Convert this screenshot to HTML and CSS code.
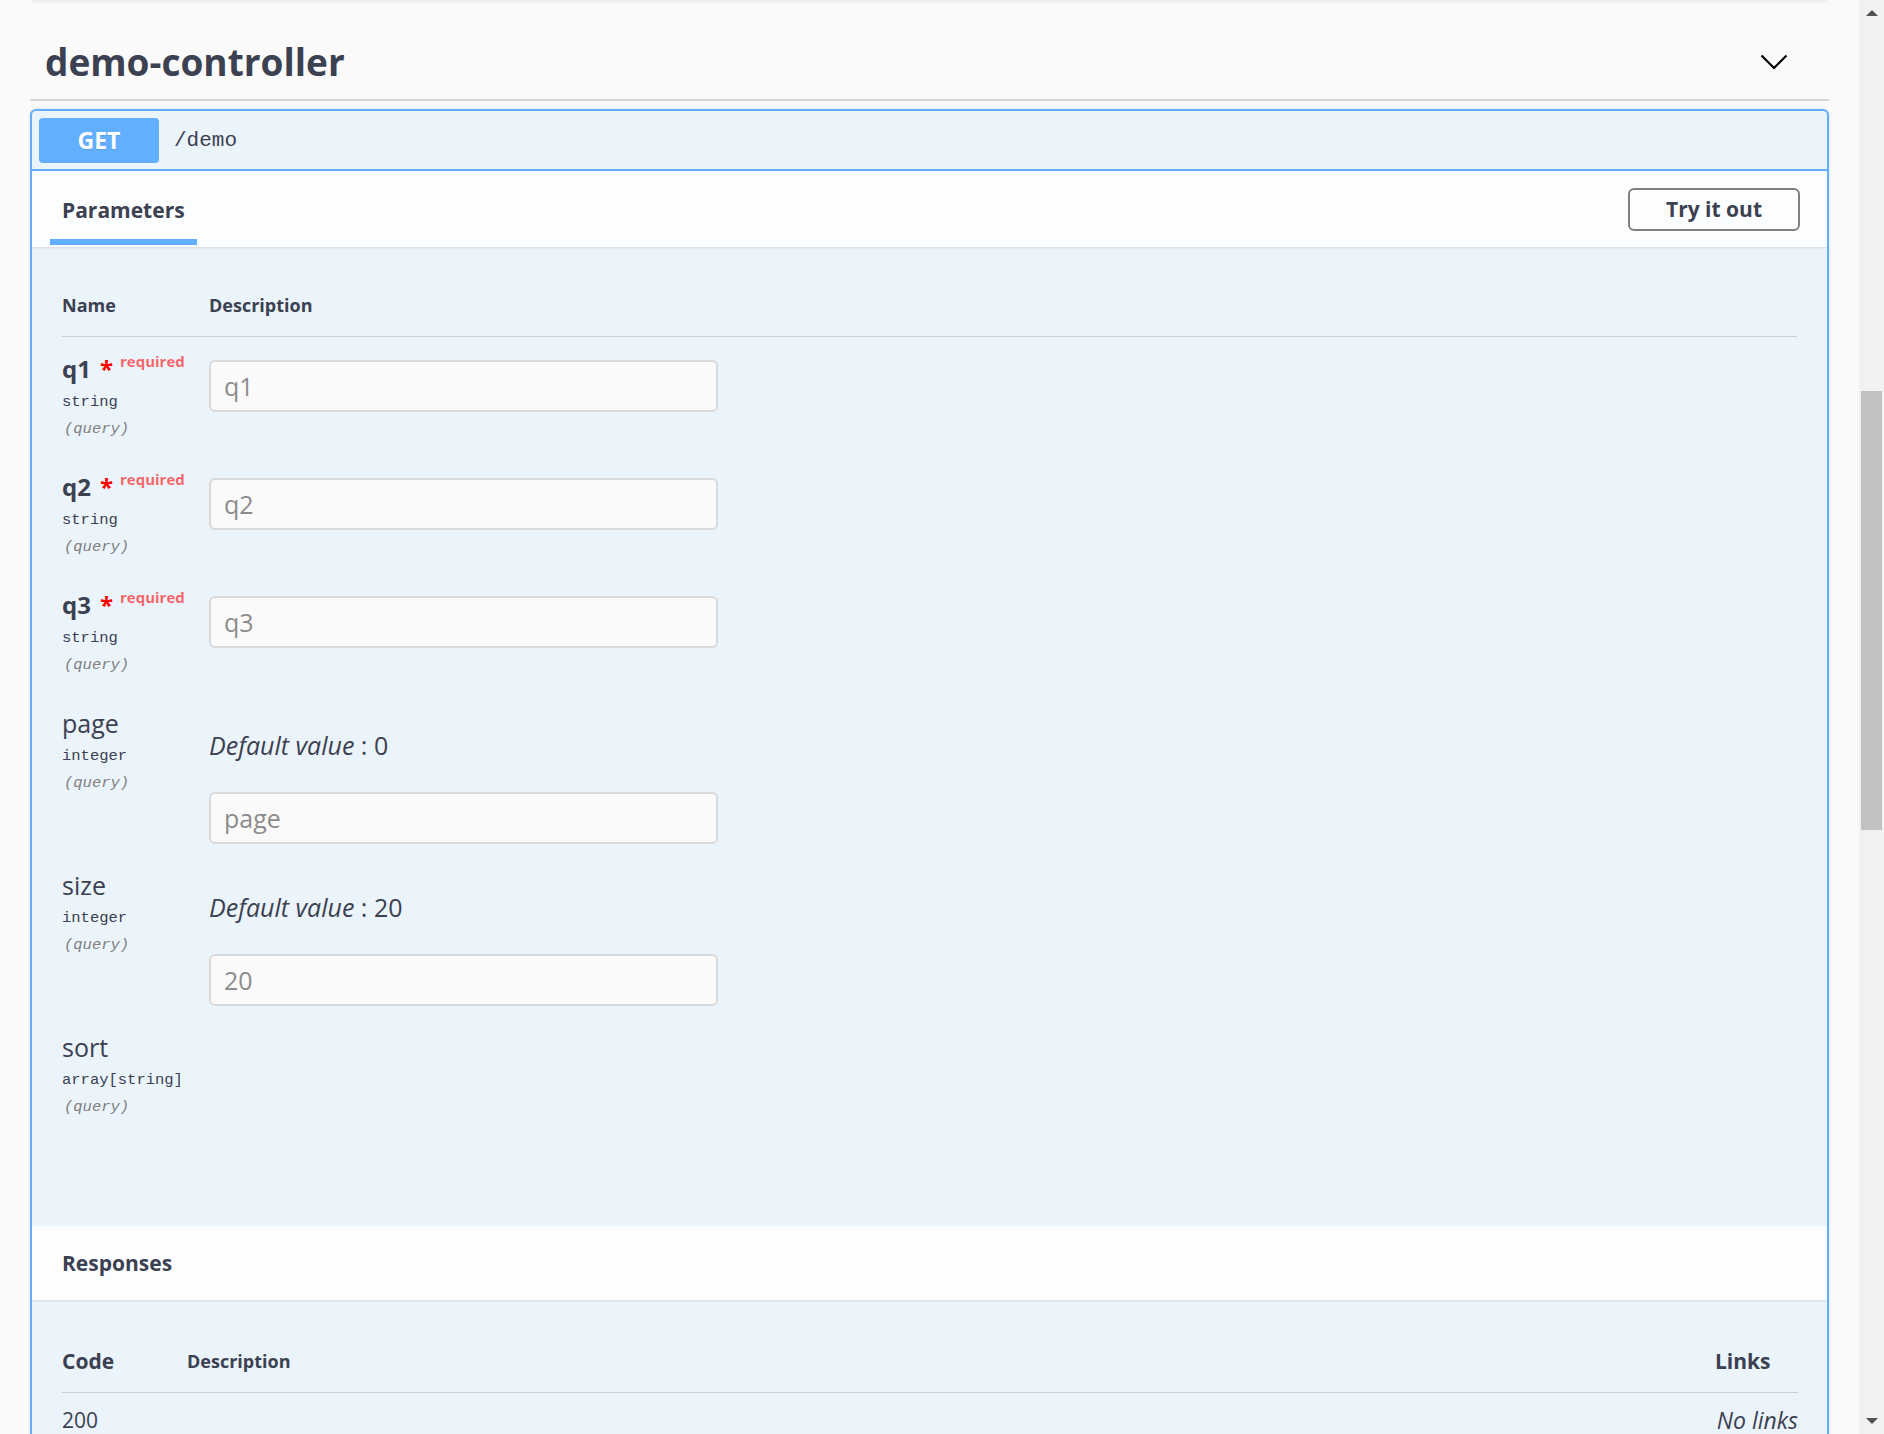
FILE: index.html
```html
<!DOCTYPE html>
<html lang="en">
<head>
<meta charset="UTF-8">
<title>Swagger UI</title>
<link rel="stylesheet" href="styles.css">
</head>
<body>
<div class="page">
  <div class="wrapper">
    <div class="prev-edge"></div>
    <!-- tag header -->
    <div class="tag-header">
      <h3 class="tag-title">demo-controller</h3>
      <svg class="chevron" width="28" height="16" viewBox="0 0 28 16">
        <path d="M1.5 1.5 L14 14 L26.5 1.5" fill="none" stroke="#000" stroke-width="2.2"/>
      </svg>
    </div>
    <!-- GET /demo -->
    <div class="opblock">
      <div class="summary">
        <span class="method">GET</span>
        <span class="path">/demo</span>
      </div>
      <div class="section-header">
        <div class="tab">
          <span class="tab-label">Parameters</span>
          <span class="tab-bar"></span>
        </div>
        <button class="try-out">Try it out</button>
      </div>
      <div class="params">
        <div class="param-head">
          <div class="col-name">Name</div>
          <div>Description</div>
        </div>
        <div class="param-row">
          <div class="col-name">
            <div class="p-name required">q1<span class="star">*</span><span class="req">required</span></div>
            <div class="p-type">string</div>
            <div class="p-in">(query)</div>
          </div>
          <div class="col-desc"><input class="p-input" placeholder="q1"></div>
        </div>
        <div class="param-row">
          <div class="col-name">
            <div class="p-name required">q2<span class="star">*</span><span class="req">required</span></div>
            <div class="p-type">string</div>
            <div class="p-in">(query)</div>
          </div>
          <div class="col-desc"><input class="p-input" placeholder="q2"></div>
        </div>
        <div class="param-row">
          <div class="col-name">
            <div class="p-name required">q3<span class="star">*</span><span class="req">required</span></div>
            <div class="p-type">string</div>
            <div class="p-in">(query)</div>
          </div>
          <div class="col-desc"><input class="p-input" placeholder="q3"></div>
        </div>
        <div class="param-row">
          <div class="col-name">
            <div class="p-name">page</div>
            <div class="p-type">integer</div>
            <div class="p-in">(query)</div>
          </div>
          <div class="col-desc">
            <p class="default"><i>Default value</i> : 0</p>
            <input class="p-input" placeholder="page">
          </div>
        </div>
        <div class="param-row">
          <div class="col-name">
            <div class="p-name">size</div>
            <div class="p-type">integer</div>
            <div class="p-in">(query)</div>
          </div>
          <div class="col-desc">
            <p class="default"><i>Default value</i> : 20</p>
            <input class="p-input" placeholder="20">
          </div>
        </div>
        <div class="param-row">
          <div class="col-name">
            <div class="p-name">sort</div>
            <div class="p-type">array[string]</div>
            <div class="p-in">(query)</div>
          </div>
          <div class="col-desc"></div>
        </div>
      </div>
      <div class="section-header resp-header">
        <h4 class="resp-title">Responses</h4>
      </div>
      <div class="responses">
        <div class="resp-head">
          <div class="col-code">Code</div>
          <div class="col-rdesc">Description</div>
          <div class="col-links">Links</div>
        </div>
        <div class="resp-row">
          <div class="col-code">200</div>
          <div class="col-rdesc"></div>
          <div class="col-links"><i>No links</i></div>
        </div>
      </div>
    </div>
  </div>
</div>
<!-- browser scrollbar -->
<div class="scrollbar">
  <div class="sb-btn"><span class="arrow-up"></span></div>
  <div class="sb-track"><div class="sb-thumb"></div></div>
  <div class="sb-btn"><span class="arrow-down"></span></div>
</div>
</body>
</html>
```

FILE: styles.css
```css
/* page base */
html, body {
  margin: 0;
  padding: 0;
  height: 100%;
}
body {
  display: flex;
  background: #fafafa;
  font-family: "Open Sans", "Noto Sans", sans-serif;
  color: #3b4151;
  overflow: hidden;
}
.page {
  flex: 1;
  overflow: hidden;
  padding: 0 30px;
}
.wrapper {
  display: flex;
  flex-direction: column;
}
.prev-edge {
  height: 1px;
  margin: -1px 2px 0;
  background: #fafafa;
  box-shadow: 0 1px 3px rgba(0, 0, 0, 0.18);
}

/* tag header */
.tag-header {
  display: flex;
  align-items: center;
  justify-content: space-between;
  box-sizing: border-box;
  height: 101px;
  padding: 24px 41px 0 15px;
  border-bottom: 2px solid rgba(59, 65, 81, 0.2);
}
.tag-title {
  margin: 0;
  font-size: 37px;
  line-height: 50px;
  font-weight: 700;
}
.chevron {
  display: block;
}

/* operation block */
.opblock {
  margin-top: 8px;
  border: 2px solid #61affe;
  border-radius: 6px;
  background: #ebf3fb;
  box-shadow: 0 0 3px rgba(0, 0, 0, 0.12);
  overflow: hidden;
}
.summary {
  display: flex;
  align-items: center;
  padding: 7px 7px 6px;
  border-bottom: 2px solid #61affe;
}
.method {
  width: 120px;
  height: 45px;
  line-height: 45px;
  text-align: center;
  background: #61affe;
  border-radius: 4px;
  color: #fff;
  font-size: 23px;
  font-weight: 700;
  text-shadow: 0 1px 0 rgba(0, 0, 0, 0.1);
}
.path {
  margin-left: 15px;
  font-family: "Liberation Mono", monospace;
  font-size: 21px;
}

/* section headers */
.section-header {
  display: flex;
  box-sizing: border-box;
  height: 76px;
  padding: 0 27px 0 30px;
  background: rgba(255, 255, 255, 0.8);
  box-shadow: 0 1px 2px rgba(0, 0, 0, 0.1);
}
.tab {
  display: flex;
  flex-direction: column;
  padding-top: 25px;
}
.tab-label {
  font-size: 21px;
  line-height: 28px;
  font-weight: 700;
}
.tab-bar {
  display: block;
  height: 6px;
  width: calc(100% + 24px);
  margin: auto 0 2px -12px;
  background: #61affe;
}
.try-out {
  margin-left: auto;
  align-self: center;
  width: 172px;
  height: 43px;
  background: transparent;
  border: 2px solid #808080;
  border-radius: 6px;
  font-family: "Open Sans", sans-serif;
  font-size: 21px;
  font-weight: 700;
  color: #3b4151;
}

/* parameters table */
.params {
  padding: 0 30px 93px;
}
.param-head {
  display: flex;
  padding: 45px 0 17px;
  border-bottom: 1px solid rgba(59, 65, 81, 0.2);
  font-size: 18px;
  line-height: 27px;
  font-weight: 700;
}
.col-name {
  width: 147px;
  flex-shrink: 0;
}
.param-row {
  display: flex;
  align-items: flex-start;
}
.param-row .col-name {
  padding: 17px 0 15px;
}
.param-row .col-desc {
  padding-top: 17px;
}
.p-name {
  font-size: 25px;
  line-height: 30px;
}
.p-name.required {
  font-size: 24px;
  font-weight: 700;
}
.star {
  margin-left: 9px;
  color: #f00;
}
.req {
  padding-left: 7px;
  font-size: 15px;
  line-height: 15px;
  vertical-align: 11px;
  color: rgba(255, 0, 0, 0.6);
}
.p-type {
  margin-top: 7px;
  font-family: "Liberation Mono", monospace;
  font-size: 15.5px;
  line-height: 22px;
}
.p-in {
  margin-top: 5px;
  margin-left: 2px;
  font-family: "Liberation Mono", monospace;
  font-size: 15.5px;
  line-height: 22px;
  font-style: italic;
  color: #808080;
}
.default {
  margin: 22px 0 32px;
  font-size: 25px;
  line-height: 30px;
}
.p-input {
  display: block;
  box-sizing: border-box;
  width: 509px;
  height: 52px;
  margin: 6px 0 9px;
  padding: 0 13px;
  border: 2px solid #d9d9d9;
  border-radius: 6px;
  background: #fafafa;
  font-family: "Open Sans", sans-serif;
  font-size: 25px;
  color: #3b4151;
}
.p-input::placeholder {
  color: #8c8c8c;
}

/* responses */
.resp-header {
  height: 74px;
  align-items: center;
}
.resp-title {
  margin: 0;
  font-size: 21px;
  line-height: 28px;
  font-weight: 700;
}
.responses {
  padding: 0 29px 200px 30px;
}
.resp-head {
  display: flex;
  align-items: flex-start;
  padding: 47px 0 17px;
  border-bottom: 1px solid rgba(59, 65, 81, 0.2);
  font-weight: 700;
}
.col-code {
  width: 125px;
  font-size: 21px;
  line-height: 28px;
}
.col-rdesc {
  flex: 1;
  font-size: 18px;
  line-height: 28px;
}
.col-links {
  width: 83px;
  font-size: 21px;
  line-height: 28px;
}
.resp-row {
  display: flex;
  padding-top: 13px;
  font-size: 21px;
  line-height: 28px;
}
.resp-row .col-links {
  width: 100px;
  font-size: 23px;
  text-align: right;
}

/* fake browser scrollbar */
.scrollbar {
  width: 25px;
  flex-shrink: 0;
  display: flex;
  flex-direction: column;
  background: #f1f1f1;
}
.sb-btn {
  height: 17px;
  display: flex;
  align-items: center;
  justify-content: center;
}
.arrow-up {
  border-left: 6px solid transparent;
  border-right: 6px solid transparent;
  border-bottom: 6px solid #505050;
  margin-top: 9px;
}
.arrow-down {
  border-left: 6px solid transparent;
  border-right: 6px solid transparent;
  border-top: 6px solid #505050;
  margin-bottom: 9px;
}
.sb-track {
  flex: 1;
}
.sb-thumb {
  height: 439px;
  margin: 374px 2px 0;
  background: #c1c1c1;
}
```
